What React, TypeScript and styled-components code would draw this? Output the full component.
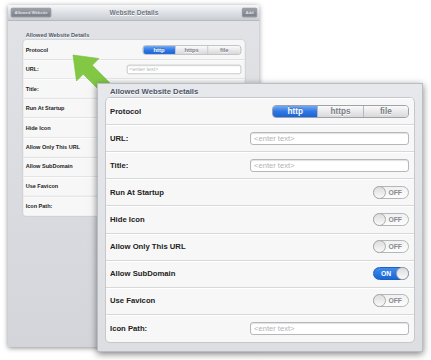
import React from 'react';
import styled, { createGlobalStyle, css } from 'styled-components';

const GlobalStyle = createGlobalStyle`
  html, body {
    margin: 0;
    padding: 0;
    background: #ffffff;
    font-family: "Liberation Sans", Arial, sans-serif;
  }
`;

const Stage = styled.div`
  position: relative;
  width: 431px;
  height: 360px;
  overflow: hidden;
  background: #ffffff;
`;

/* back window: the full-size screenshot, drawn at the same scale as the zoom and shrunk */
const BackFrame = styled.div`
  position: absolute;
  left: 8px;
  top: 5px;
  width: 251px;
  height: 342px;
  box-shadow: 0 1px 5px rgba(0, 0, 0, 0.45);
`;

const BackWindow = styled.div`
  width: 349px;
  height: 475px;
  transform: scale(0.72);
  transform-origin: top left;
  display: flex;
  flex-direction: column;
  background: linear-gradient(#e1e3e7, #d3d5da);
`;

const Toolbar = styled.div`
  height: 21px;
  flex: none;
  display: grid;
  grid-template-columns: 1fr auto 1fr;
  align-items: center;
  padding: 0 3px 0 4px;
  background: linear-gradient(#f6f7f9, #d9dce1 60%, #c9ccd2);
  border-bottom: 1px solid #a7abb3;
`;

const ToolbarButton = styled.div<{ $align: 'start' | 'end' }>`
  justify-self: ${({ $align }) => $align};
  height: 11px;
  padding: 0 4px;
  display: flex;
  align-items: center;
  border-radius: 2px;
  border: 1px solid #6c7079;
  background: linear-gradient(#9ca0a8, #7a7f88);
  color: #e9ebee;
  font-size: 5.8px;
  font-weight: bold;
  text-shadow: 0 -1px 0 rgba(0, 0, 0, 0.3);
`;

const ToolbarTitle = styled.div`
  font-size: 9.2px;
  font-weight: bold;
  color: #6f7583;
  text-shadow: 0 1px 0 #ffffff;
`;

const Content = styled.div<{ $top: number; $side: number }>`
  padding: ${({ $top, $side }) => `${$top}px ${$side}px 0`};
`;

/* front window: the zoomed crop */
const FrontWindow = styled.div`
  position: absolute;
  left: 97px;
  top: 83px;
  width: 326px;
  height: 269px;
  box-sizing: border-box;
  background: linear-gradient(#e6e8eb, #dcdee2);
  border: 1px solid #b9bdc4;
  box-shadow: 0 2px 7px rgba(0, 0, 0, 0.5);
  z-index: 2;
`;

const SectionTitle = styled.div`
  height: 10px;
  line-height: 10px;
  padding: 0 0 0 5px;
  font-size: 7.7px;
  font-weight: bold;
  color: #4c5669;
  text-shadow: 0 1px 0 #ffffff;
`;

const Card = styled.div`
  height: 246px;
  box-sizing: border-box;
  display: grid;
  grid-auto-rows: 1fr;
  background: #f7f7f7;
  border: 1px solid #c6c8cc;
  border-radius: 5px;
  overflow: hidden;
`;

const Row = styled.div`
  display: flex;
  align-items: center;
  justify-content: space-between;
  padding: 0 5px 0 4px;
  border-bottom: 1px solid #d8d8d8;
  box-shadow: inset 0 1px 0 #ffffff;

  &:last-child {
    border-bottom: none;
  }
`;

const Label = styled.span`
  font-size: 7.7px;
  font-weight: bold;
  color: #222222;
`;

const Segmented = styled.div`
  width: 137px;
  height: 13px;
  display: flex;
  box-sizing: border-box;
  border: 1px solid #9da2aa;
  border-radius: 4px;
  overflow: hidden;
`;

const Segment = styled.div<{ $active?: boolean }>`
  flex: 1;
  display: flex;
  align-items: center;
  justify-content: center;
  font-size: 8.2px;
  font-weight: bold;
  border-left: 1px solid #b5b9bf;

  &:first-child {
    border-left: none;
  }

  ${({ $active }) =>
    $active
      ? css`
          background: linear-gradient(#70a9f3, #2f78e4 50%, #1b63d6);
          color: #ffffff;
          text-shadow: 0 -1px 0 rgba(0, 0, 0, 0.25);
        `
      : css`
          background: linear-gradient(#fbfbfb, #e9e9e9 50%, #d9d9d9);
          color: #7b7f86;
          text-shadow: 0 1px 0 #ffffff;
        `}
`;

const TextField = styled.div`
  width: 159px;
  height: 13px;
  box-sizing: border-box;
  display: flex;
  align-items: center;
  padding-left: 3px;
  background: #ffffff;
  border: 1px solid #b5b7ba;
  border-radius: 3px;
  box-shadow: inset 0 1px 1px rgba(0, 0, 0, 0.12);
  color: #b3b3b3;
  font-size: 7.6px;
`;

const SwitchTrack = styled.div<{ $on: boolean }>`
  position: relative;
  width: 36px;
  height: 13px;
  box-sizing: border-box;
  display: flex;
  align-items: center;
  justify-content: ${({ $on }) => ($on ? 'flex-start' : 'flex-end')};
  padding: ${({ $on }) => ($on ? '0 0 0 7px' : '0 6px 0 0')};
  border-radius: 7px;
  border: 1px solid ${({ $on }) => ($on ? '#1c5fc4' : '#b4b6b9')};
  background: ${({ $on }) =>
    $on ? 'linear-gradient(#3f8cea, #1a66d6)' : 'linear-gradient(#f0f0f0, #fdfdfd)'};
  color: ${({ $on }) => ($on ? '#ffffff' : '#888b90')};
  font-size: 6.8px;
  font-weight: bold;
`;

const Knob = styled.div<{ $on: boolean }>`
  position: absolute;
  top: -1px;
  ${({ $on }) => ($on ? 'right: -1px;' : 'left: -1px;')}
  width: 13px;
  height: 13px;
  box-sizing: border-box;
  border-radius: 50%;
  border: 1px solid #a9abae;
  background: linear-gradient(#dcdcdc, #fafafa);
`;

const Arrow = styled.svg`
  position: absolute;
  left: 0;
  top: 0;
  z-index: 1;
`;

const Switch = ({ on }: { on: boolean }) => (
  <SwitchTrack $on={on}>
    {on ? 'ON' : 'OFF'}
    <Knob $on={on} />
  </SwitchTrack>
);

type Field =
  | { label: string; kind: 'protocol' }
  | { label: string; kind: 'text' }
  | { label: string; kind: 'switch'; on: boolean };

const fields: Field[] = [
  { label: 'Protocol', kind: 'protocol' },
  { label: 'URL:', kind: 'text' },
  { label: 'Title:', kind: 'text' },
  { label: 'Run At Startup', kind: 'switch', on: false },
  { label: 'Hide Icon', kind: 'switch', on: false },
  { label: 'Allow Only This URL', kind: 'switch', on: false },
  { label: 'Allow SubDomain', kind: 'switch', on: true },
  { label: 'Use Favicon', kind: 'switch', on: false },
  { label: 'Icon Path:', kind: 'text' },
];

const DetailsForm = () => (
  <>
    <SectionTitle>Allowed Website Details</SectionTitle>
    <Card>
      {fields.map((f) => (
        <Row key={f.label}>
          <Label>{f.label}</Label>
          {f.kind === 'protocol' && (
            <Segmented>
              <Segment $active>http</Segment>
              <Segment>https</Segment>
              <Segment>file</Segment>
            </Segmented>
          )}
          {f.kind === 'text' && <TextField>&lt;enter text&gt;</TextField>}
          {f.kind === 'switch' && <Switch on={f.on} />}
        </Row>
      ))}
    </Card>
  </>
);

export default function App() {
  return (
    <Stage>
      <GlobalStyle />
      <BackFrame>
        <BackWindow>
          <Toolbar>
            <ToolbarButton $align="start">Allowed Website</ToolbarButton>
            <ToolbarTitle>Website Details</ToolbarTitle>
            <ToolbarButton $align="end">Add</ToolbarButton>
          </Toolbar>
          <Content $top={16} $side={19.5}>
            <DetailsForm />
          </Content>
        </BackWindow>
      </BackFrame>

      <Arrow width="431" height="360" viewBox="0 0 431 360">
        <polygon
          points="73,55 99,58.5 92.3,65.2 122,95 113,104 83.2,74.2 76.5,81"
          fill="#83c845"
          stroke="#79bd3c"
          strokeWidth="0.6"
          strokeLinejoin="round"
        />
      </Arrow>

      <FrontWindow>
        <Content $top={3} $side={7}>
          <DetailsForm />
        </Content>
      </FrontWindow>
    </Stage>
  );
}
